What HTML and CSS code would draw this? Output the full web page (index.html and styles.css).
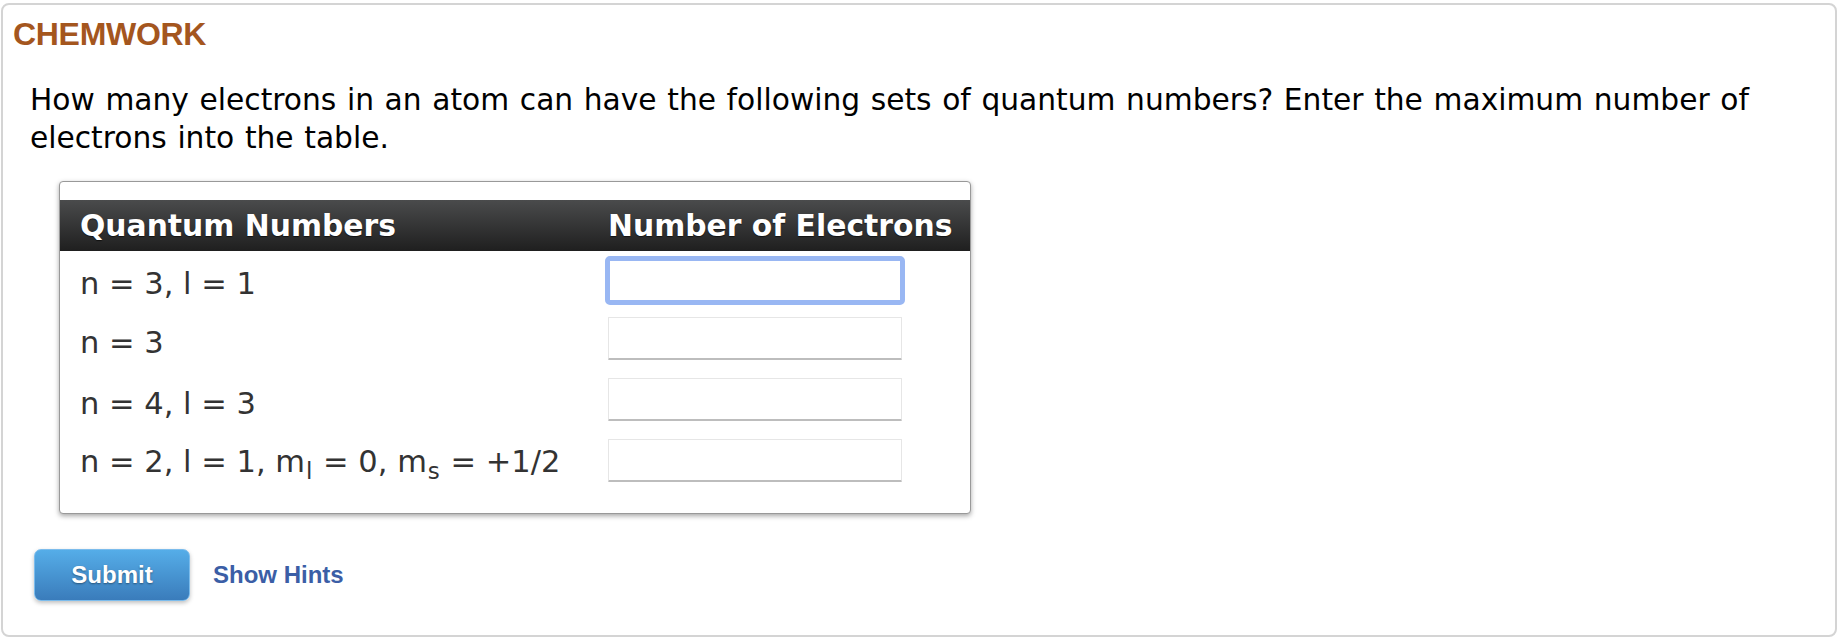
FILE: index.html
```html
<!DOCTYPE html>
<html lang="en">
<head>
  <meta charset="UTF-8" />
  <title>Chemwork</title>
  <link rel="stylesheet" href="styles.css">
</head>
<body>
  <div class="card">
    <h1 class="title">CHEMWORK</h1>
    <p class="question">How many electrons in an atom can have the following sets of quantum numbers? Enter the maximum number of electrons into the table.</p>

    <div class="table-box">
      <table class="qn-table">
        <tr>
          <th class="col-q">Quantum Numbers</th>
          <th class="col-e">Number of Electrons</th>
        </tr>
        <tr class="first-row">
          <td>n = 3, l = 1</td>
          <td><input type="text" class="answer focused" /></td>
        </tr>
        <tr>
          <td>n = 3</td>
          <td><input type="text" class="answer" /></td>
        </tr>
        <tr>
          <td>n = 4, l = 3</td>
          <td><input type="text" class="answer" /></td>
        </tr>
        <tr>
          <td>n = 2, l = 1, m<sub>l</sub> = 0, m<sub>s</sub> = +1/2</td>
          <td><input type="text" class="answer" /></td>
        </tr>
      </table>
    </div>

    <div class="actions">
      <button class="submit">Submit</button>
      <a href="#" class="hints">Show Hints</a>
    </div>
  </div>
</body>
</html>
```

FILE: styles.css
```css
body {
  margin: 0;
  padding: 3px 1px 0 1px;
  background-color: #ffffff;
  font-family: 'DejaVu Sans', Verdana, sans-serif;
}

.card {
  box-sizing: border-box;
  height: 634px;
  border: 2px solid #d4d4d4;
  border-radius: 8px;
  padding: 0 12px;
}

.title {
  margin: 11px 0 0 -2px;
  font-family: 'Liberation Sans', Arial, sans-serif;
  font-size: 32px;
  line-height: 36px;
  font-weight: bold;
  color: #a4561e;
  letter-spacing: -0.3px;
}

.question {
  margin: 29px 0 0 15px;
  font-size: 29.7px;
  line-height: 37.5px;
  word-spacing: 1.2px;
  color: #000000;
}

.table-box {
  width: 910px;
  margin: 25px 0 0 44px;
  border: 1px solid #999999;
  border-radius: 4px;
  padding: 18px 0 22px 0;
  box-shadow: 0 2px 5px rgba(0, 0, 0, 0.35);
  background-color: #ffffff;
}

.qn-table {
  width: 100%;
  border-collapse: collapse;
  table-layout: fixed;
}

.qn-table th {
  height: 51px;
  padding: 0 20px;
  font-size: 29.8px;
  font-weight: bold;
  color: #ffffff;
  text-align: left;
  white-space: nowrap;
  text-shadow: 0 1px 1px rgba(0, 0, 0, 0.6);
  background: linear-gradient(to bottom, #4a4b4c, #1f1f1f);
}

.qn-table th.col-q {
  box-sizing: border-box;
  width: 548px;
}

.qn-table th.col-e {
  padding: 0 20px 0 0;
  text-align: right;
}

.qn-table td {
  box-sizing: border-box;
  height: 61px;
  padding: 7px 20px 0 20px;
  font-size: 30.5px;
  color: #333333;
  white-space: nowrap;
}

.qn-table td:last-child {
  padding: 0;
}

.qn-table .first-row td {
  height: 57px;
  padding-top: 8px;
}

.qn-table .first-row td:last-child {
  padding-top: 2px;
}

.qn-table sub {
  font-size: 23px;
  margin: 0 1px;
}

.answer {
  box-sizing: border-box;
  display: block;
  width: 294px;
  height: 43px;
  margin: 0;
  border: 1px solid #e6e6e6;
  border-bottom: 2px solid #bdbdbd;
  border-radius: 1px;
  background-color: #ffffff;
  font-size: 20px;
}

.answer.focused {
  outline: 5px solid #99b7f3;
  outline-offset: -2px;
  border-radius: 2px;
}

.actions {
  display: flex;
  align-items: center;
  margin: 35px 0 0 19px;
  gap: 23px;
}

.submit {
  width: 156px;
  height: 52px;
  border: 1px solid #7cbcec;
  border-radius: 7px;
  background: linear-gradient(to bottom, #55ade8, #3a7cbb);
  color: #ffffff;
  font-family: 'Liberation Sans', Arial, sans-serif;
  font-size: 24px;
  font-weight: bold;
  text-shadow: 0 1px 2px rgba(0, 0, 0, 0.4);
  box-shadow: 0 2px 4px rgba(0, 0, 0, 0.25);
}

.hints {
  font-family: 'Liberation Sans', Arial, sans-serif;
  font-size: 24px;
  font-weight: bold;
  color: #3b5ea6;
  text-decoration: none;
}
```
